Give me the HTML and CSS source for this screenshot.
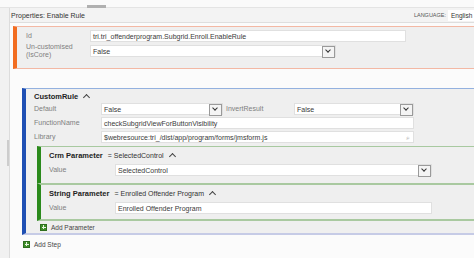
FILE: index.html
```html
<!DOCTYPE html>
<html lang="en">
<head>
    <meta charset="UTF-8">
    <title>Properties: Enable Rule</title>
    <link rel="stylesheet" href="styles.css">
</head>
<body>
    <div class="top-strip"><span class="grip"></span></div>
    <div class="main">
        <div class="side"><span class="side-thumb"></span></div>
        <div class="panel">
            <div class="panel-head">
                <span>Properties: Enable Rule</span>
                <div class="lang">
                    <span class="lang-label">LANGUAGE:</span>
                    <span class="lang-box">English</span>
                </div>
            </div>

            <div class="box box-orange">
                <div class="row">
                    <label class="lbl lbl-wide">Id</label>
                    <div class="field field-id">tri.tri_offenderprogram.Subgrid.Enroll.EnableRule</div>
                </div>
                <div class="row">
                    <label class="lbl lbl-wide">Un-customised<br>(IsCore)</label>
                    <div class="field field-select field-core">False<span class="drop"></span></div>
                </div>
            </div>

            <div class="box box-blue">
                <div class="box-title">CustomRule <span class="caret"></span></div>
                <div class="row">
                    <label class="lbl">Default</label>
                    <div class="field field-select field-half">False<span class="drop"></span></div>
                    <label class="lbl lbl-invert">InvertResult</label>
                    <div class="field field-select field-half2">False<span class="drop"></span></div>
                </div>
                <div class="row">
                    <label class="lbl">FunctionName</label>
                    <div class="field field-long">checkSubgridViewForButtonVisibility</div>
                </div>
                <div class="row">
                    <label class="lbl">Library</label>
                    <div class="field field-long field-search">$webresource:tri_/dist/app/program/forms/jmsform.js<span class="search">&#x2315;</span></div>
                </div>

                <div class="box box-green">
                    <div class="box-title">Crm Parameter <span class="eq">= SelectedControl</span> <span class="caret"></span></div>
                    <div class="row">
                        <label class="lbl">Value</label>
                        <div class="field field-select field-param">SelectedControl<span class="drop"></span></div>
                    </div>
                </div>
                <div class="box box-green">
                    <div class="box-title">String Parameter <span class="eq">= Enrolled Offender Program</span> <span class="caret"></span></div>
                    <div class="row">
                        <label class="lbl">Value</label>
                        <div class="field field-param">Enrolled Offender Program</div>
                    </div>
                </div>
                <div class="add add-param"><span class="plus"></span>Add Parameter</div>
            </div>

            <div class="add add-step"><span class="plus"></span>Add Step</div>
        </div>
    </div>
</body>
</html>
```

FILE: styles.css
```css
body {
    margin: 0;
    width: 474px;
    height: 258px;
    overflow: hidden;
    background: #fff;
    font-family: "Liberation Sans", Arial, sans-serif;
    font-size: 7px;
    color: #333;
}

.top-strip {
    height: 8px;
    background: #fafafa;
    border-bottom: 1px solid #e4e4e4;
    box-sizing: border-box;
}

.grip {
    display: block;
    width: 19px;
    height: 3px;
    margin-left: 87px;
    padding-top: 5px;
    background: #b0b0b0;
    background-clip: content-box;
}

.main {
    display: flex;
    height: 250px;
}

.side {
    width: 9px;
    flex: none;
    background: #f1f1f1;
    border-right: 1px solid #dcdcdc;
    position: relative;
}

.side-thumb {
    position: absolute;
    right: 0;
    top: 132px;
    width: 2px;
    height: 26px;
    background: #cdcdcd;
}

.panel {
    flex: 1;
    background: #fbfbfb;
}

.panel-head {
    display: flex;
    align-items: center;
    justify-content: space-between;
    height: 14px;
    padding-left: 1px;
    background: #f3f3f3;
    border-bottom: 1px solid #dedede;
    color: #333;
}

.lang {
    display: flex;
    align-items: center;
    gap: 2px;
}

.lang-label {
    font-size: 5.5px;
    color: #555;
}

.lang-box {
    background: #fff;
    padding: 2px 3px;
    font-size: 6.5px;
    width: 20px;
}

.box {
    background: #efefef;
    box-sizing: border-box;
}

.box-orange {
    margin: 3px 0 0 3px;
    height: 43px;
    padding: 2px 0 0 9px;
    border-left: 4px solid #f26d21;
    border-top: 1px solid #f3b8a4;
    border-bottom: 1px solid #f3b8a4;
}

.box-blue {
    margin: 19px 0 0 12px;
    padding: 1px 0 0 0;
    border-left: 4px solid #1f4fb3;
    border-top: 1px solid #93b1df;
    border-bottom: 2px solid #c6cbe6;
}

.box-blue > .box-title,
.box-blue > .row {
    padding-left: 8px;
}

.box-title {
    display: flex;
    align-items: center;
    height: 12px;
    font-weight: bold;
    font-size: 7.5px;
    color: #222;
}

.eq {
    font-weight: normal;
    font-size: 7px;
    color: #333;
    margin-left: 5px;
}

.caret {
    width: 4px;
    height: 4px;
    margin: 2px 0 0 6px;
    border-left: 1px solid #444;
    border-top: 1px solid #444;
    transform: rotate(45deg);
}

.row {
    display: flex;
    align-items: center;
    min-height: 13px;
    margin-bottom: 1px;
}

.lbl {
    width: 67px;
    flex: none;
    color: #808080;
    line-height: 8px;
}

.lbl-wide {
    width: 64px;
}

.lbl-invert {
    width: 68px;
    margin-left: 3px;
}

.field {
    position: relative;
    height: 12px;
    line-height: 12px;
    padding-left: 2px;
    background: #fff;
    border: 1px solid #e0e0e0;
    box-sizing: border-box;
    white-space: nowrap;
    color: #3a3a3a;
}

.field-id {
    width: 316px;
}

.row:has(.field-core) {
    min-height: 16px;
    margin-top: 1px;
}

.field-core {
    width: 246px;
}

.field-half {
    width: 122px;
}

.field-half2 {
    width: 120px;
}

.field-long {
    width: 313px;
}

.field-param {
    width: 317px;
}

.drop {
    position: absolute;
    right: 0;
    top: 0;
    width: 11px;
    height: 10px;
    background: #f4f4f4;
    border: 1px solid #9a9a9a;
}

.drop::after {
    content: "";
    position: absolute;
    left: 3px;
    top: 1px;
    width: 3px;
    height: 3px;
    border-right: 1.5px solid #333;
    border-bottom: 1.5px solid #333;
    transform: rotate(45deg);
}

.search {
    position: absolute;
    right: 3px;
    top: 0;
    color: #999;
    font-size: 7px;
}

.box-green {
    margin: 3px 0 0 11px;
    height: 37px;
    padding: 2px 0 0 8px;
    border-left: 4px solid #2b8a1c;
    border-top: 1px solid #a8c9a0;
}

.box-green + .box-green {
    margin-top: 0;
    border-top: 2px solid #a9c9a0;
    border-bottom: 2px solid #a9c9a0;
    height: 38px;
}

.box-green .row {
    margin-top: 2px;
}

.box-green .lbl {
    width: 66px;
}

.add {
    display: flex;
    align-items: center;
    gap: 4px;
    color: #444;
    font-size: 6.5px;
}

.add-param {
    height: 12px;
    padding-left: 14px;
}

.add-step {
    margin: 3px 0 0 13px;
    height: 12px;
}

.plus {
    position: relative;
    width: 7px;
    height: 7px;
    background: #3f8f2a;
    border: 1px solid #2e6e1e;
    box-sizing: border-box;
}

.plus::before,
.plus::after {
    content: "";
    position: absolute;
    background: #e8f4e0;
}

.plus::before {
    left: 2px;
    top: 0.5px;
    width: 1px;
    height: 4px;
}

.plus::after {
    left: 0.5px;
    top: 2px;
    width: 4px;
    height: 1px;
}
```
